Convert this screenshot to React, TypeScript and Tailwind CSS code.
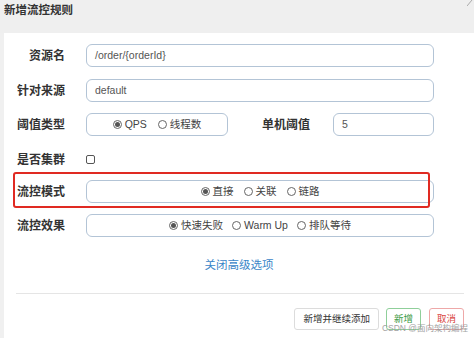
import React from "react";

const FONT = { fontFamily: '"Liberation Sans", "Noto Sans CJK SC", sans-serif' };

function Radio({ checked, label }: { checked?: boolean; label: string }) {
  return (
    <span className="flex items-center gap-[3px]">
      <span className="w-[9px] h-[9px] rounded-full border border-[#666] flex items-center justify-center bg-white">
        {checked && <span className="w-[5px] h-[5px] rounded-full bg-[#555]" />}
      </span>
      <span className="text-[10.5px] text-[#444] leading-none">{label}</span>
    </span>
  );
}

function Label({ text, w = "w-[49px]" }: { text: string; w?: string }) {
  return (
    <div className={`${w} shrink-0 text-right text-[12px] font-semibold text-[#333] leading-none`}>{text}</div>
  );
}

function Box({ children, className = "" }: { children?: React.ReactNode; className?: string }) {
  return (
    <div className={`h-[23px] border border-[#b3c4d6] rounded-[6px] bg-white flex items-center ${className}`}>
      {children}
    </div>
  );
}

export default function App() {
  return (
    <div className="w-[474px] h-[338px] bg-[#f0f0f0] relative overflow-hidden" style={FONT}>
      {/* header */}
      <div className="h-[33px] bg-[#efefef] pl-[4px] pt-[5px] relative">
        <div className="text-[11.5px] font-bold text-[#333] leading-none">新增流控规则</div>
        <svg className="absolute right-[1px] top-[0px]" width="6" height="6" viewBox="0 0 6 6">
          <line x1="0" y1="6" x2="5" y2="0" stroke="#aaa" strokeWidth="1" />
        </svg>
      </div>
      {/* body */}
      <div className="ml-[4px] bg-white h-[305px] flex flex-col">
        <div className="pl-[12px] pr-[40px] pt-[11px] flex flex-col">
          <div className="flex items-center h-[23px] gap-[21px]">
            <Label text="资源名" />
            <Box className="flex-1 pl-[8px]">
              <span className="text-[10.5px] text-[#555]">/order/{"{orderId}"}</span>
            </Box>
          </div>
          <div className="flex items-center h-[23px] gap-[21px] mt-[12px]">
            <Label text="针对来源" />
            <Box className="flex-1 pl-[8px]">
              <span className="text-[10.5px] text-[#555]">default</span>
            </Box>
          </div>
          <div className="flex items-center h-[23px] mt-[11px]">
            <Label text="阈值类型" />
            <Box className="w-[142px] ml-[21px] justify-center gap-[11px]">
              <Radio checked label="QPS" />
              <Radio label="线程数" />
            </Box>
            <Label text="单机阈值" w="w-[82px]" />
            <Box className="flex-1 ml-[23px] pl-[8px]">
              <span className="text-[10.5px] text-[#555]">5</span>
            </Box>
          </div>
          <div className="flex items-center h-[23px] gap-[21px] mt-[12px]">
            <Label text="是否集群" />
            <span className="w-[9px] h-[9px] border border-[#555] rounded-[2px] bg-white" />
          </div>
          <div className="flex items-center h-[23px] gap-[21px] mt-[9px] relative">
            <Label text="流控模式" />
            <Box className="flex-1 justify-center gap-[10px]">
              <Radio checked label="直接" />
              <Radio label="关联" />
              <Radio label="链路" />
            </Box>
            <div className="absolute left-[-3px] right-[4px] top-[-8px] bottom-[-5px] border-2 border-[#e02a22] rounded-[3px] pointer-events-none" />
          </div>
          <div className="flex items-center h-[23px] gap-[21px] mt-[11px]">
            <Label text="流控效果" />
            <Box className="flex-1 justify-center gap-[9px]">
              <Radio checked label="快速失败" />
              <Radio label="Warm Up" />
              <Radio label="排队等待" />
            </Box>
          </div>
        </div>
        <div className="mt-[21px] h-[16px] flex items-center justify-center text-[11.5px] text-[#3a86c8] leading-none">
          关闭高级选项
        </div>
        <div className="mt-[19px] ml-[12px] mr-[10px] h-px bg-[#e5e5e5]" />
        <div className="mt-[14px] mr-[10px] flex justify-end gap-[7px]">
          <div className="h-[22px] px-[8px] flex items-center border border-[#dcdcdc] rounded-[3px] text-[9.5px] text-[#333] bg-white">
            新增并继续添加
          </div>
          <div className="h-[22px] w-[35px] flex items-center justify-center border border-[#8fcf9a] rounded-[3px] text-[9.5px] text-[#3a9a44] bg-white">
            新增
          </div>
          <div className="h-[22px] w-[35px] ml-[1px] flex items-center justify-center border border-[#eea8a8] rounded-[3px] text-[9.5px] text-[#d9463f] bg-white">
            取消
          </div>
        </div>
      </div>
      <div className="absolute right-[6px] top-[323px] text-[8.5px] leading-[10px] text-[#999] opacity-90 whitespace-nowrap">
        CSDN @面向架构编程
      </div>
    </div>
  );
}
